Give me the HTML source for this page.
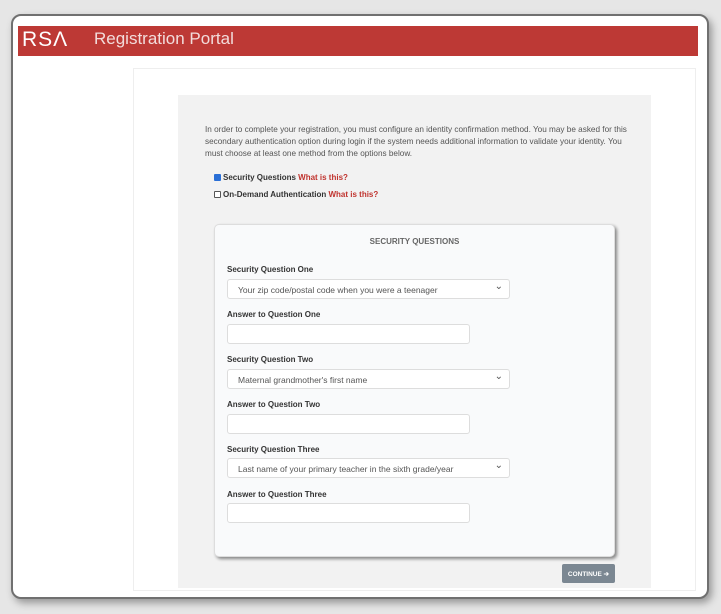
<!DOCTYPE html>
<html><head><style>
*{margin:0;padding:0;box-sizing:border-box}
body{width:721px;height:614px;background:#e6e6e6;position:relative;overflow:hidden;font-family:"Liberation Sans",sans-serif}
.abs{position:absolute}
#win{left:11px;top:14px;width:698px;height:585px;background:#fff;border:2px solid #707070;border-radius:10px;box-shadow:3px 4px 8px rgba(0,0,0,.35)}
#hdr{left:18px;top:26px;width:680px;height:30px;background:#bd3935}
.lbl{font-size:8px;font-weight:bold;color:#333;left:227px}
.sel{left:227px;width:283px;height:20px;background:#fff;border:1px solid #ddd;border-radius:3px;font-size:8.5px;color:#555;padding:5px 10px}
.sel:after{content:"⌄";position:absolute;right:6px;top:1px;font-size:10px}
.inp{left:227px;width:243px;height:20px;background:#fff;border:1px solid #ddd;border-radius:3px}
</style></head><body>
<div id="win" class="abs"></div>
<div id="hdr" class="abs"></div>
<div class="abs" style="left:22px;top:28px;color:#fff;font-size:21px;letter-spacing:1px">RSΛ</div>
<div class="abs" style="left:94px;top:29px;color:#f2dcdb;font-size:17px">Registration Portal</div>
<div class="abs" style="left:133px;top:68px;width:563px;height:523px;border:1px solid #eee;background:#fff"></div>
<div class="abs" style="left:178px;top:95px;width:473px;height:493px;background:#f2f2f2"></div>
<div class="abs" style="left:205px;top:124px;width:424px;font-size:8.2px;line-height:12px;color:#555">In order to complete your registration, you must configure an identity confirmation method. You may be asked for this secondary authentication option during login if the system needs additional information to validate your identity. You must choose at least one method from the options below.</div>
<div class="abs" style="left:214px;top:174px;width:7px;height:7px;background:#2a6fd6;border-radius:1px"></div>
<div class="abs" style="left:223px;top:173px;font-size:8px;font-weight:bold;color:#333">Security Questions <span style="color:#c0332e">What is this?</span></div>
<div class="abs" style="left:214px;top:191px;width:7px;height:7px;border:1px solid #555;border-radius:1px;background:#fff"></div>
<div class="abs" style="left:223px;top:190px;font-size:8px;font-weight:bold;color:#333">On-Demand Authentication <span style="color:#c0332e">What is this?</span></div>
<div class="abs" style="left:214px;top:224px;width:401px;height:333px;background:#f9fafb;border:1px solid #ddd;border-radius:5px;box-shadow:2px 2px 3px rgba(0,0,0,.45)"></div>
<div class="abs" style="left:214px;top:237px;width:401px;text-align:center;font-size:8px;font-weight:bold;color:#666">SECURITY QUESTIONS</div>
<div class="abs lbl" style="top:265px">Security Question One</div>
<div class="abs sel" style="top:279px">Your zip code/postal code when you were a teenager</div>
<div class="abs lbl" style="top:310px">Answer to Question One</div>
<div class="abs inp" style="top:324px"></div>
<div class="abs lbl" style="top:355px">Security Question Two</div>
<div class="abs sel" style="top:369px">Maternal grandmother's first name</div>
<div class="abs lbl" style="top:400px">Answer to Question Two</div>
<div class="abs inp" style="top:414px"></div>
<div class="abs lbl" style="top:445px">Security Question Three</div>
<div class="abs sel" style="top:458px">Last name of your primary teacher in the sixth grade/year</div>
<div class="abs lbl" style="top:490px">Answer to Question Three</div>
<div class="abs inp" style="top:503px"></div>
<div class="abs" style="left:562px;top:564px;width:53px;height:19px;background:#7b8792;border-radius:2px;color:#fff;font-size:6.5px;font-weight:bold;padding-top:6px;text-align:center">CONTINUE ➔</div>
</body></html>
